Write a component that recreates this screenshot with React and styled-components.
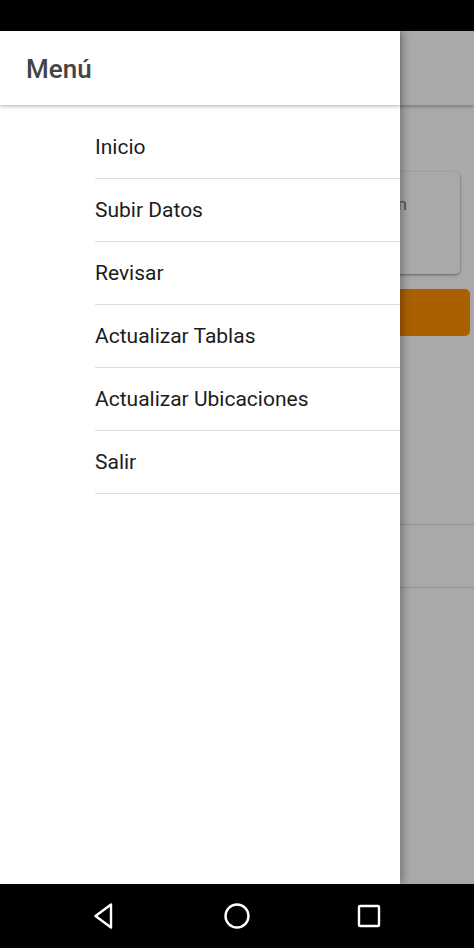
import React from 'react';
import styled, { createGlobalStyle } from 'styled-components';

const menuItems = [
    'Inicio',
    'Subir Datos',
    'Revisar',
    'Actualizar Tablas',
    'Actualizar Ubicaciones',
    'Salir',
];

export default function App() {
    return (
        <>
            <GlobalStyle />
            <Screen>
                <StatusBar />
                <Body>
                    {/* app behind the drawer */}
                    <BackApp>
                        <BackHeader />
                        <BackContent>
                            <SyncCard>
                                <SyncText>Última sincronización</SyncText>
                            </SyncCard>
                            <SyncButton />
                            <BackList>
                                <BackRow />
                                <BackRow />
                            </BackList>
                        </BackContent>
                    </BackApp>
                    <Scrim />

                    <Drawer>
                        <DrawerHeader>
                            <DrawerTitle>Menú</DrawerTitle>
                        </DrawerHeader>
                        <MenuList>
                            {menuItems.map((item) => (
                                <MenuItem key={item}>
                                    <MenuLabel>{item}</MenuLabel>
                                </MenuItem>
                            ))}
                        </MenuList>
                    </Drawer>
                </Body>
                <NavBar>
                    <NavButton>
                        <svg width="28" height="28" viewBox="0 0 28 28" fill="none" stroke="#fff" strokeWidth="2.4" strokeLinejoin="round">
                            <path d="M20 2.5 L4.5 14 L20 25.5 Z" />
                        </svg>
                    </NavButton>
                    <NavButton>
                        <svg width="28" height="28" viewBox="0 0 28 28" fill="none" stroke="#fff" strokeWidth="2.4">
                            <circle cx="14" cy="14" r="11.5" />
                        </svg>
                    </NavButton>
                    <NavButton>
                        <svg width="28" height="28" viewBox="0 0 28 28" fill="none" stroke="#fff" strokeWidth="2.4">
                            <rect x="4" y="4" width="20" height="20" rx="1" />
                        </svg>
                    </NavButton>
                </NavBar>
            </Screen>
        </>
    );
}

const GlobalStyle = createGlobalStyle`
html, body {
    margin: 0;
    padding: 0;
    background: #000;
}
* {
    box-sizing: border-box;
}
`;

const Screen = styled.div`
width: 474px;
height: 948px;
display: flex;
flex-direction: column;
font-family: Roboto, "Noto Sans", sans-serif;
overflow: hidden;
`;

const StatusBar = styled.div`
height: 31px;
background: #000;
flex-shrink: 0;
`;

const Body = styled.div`
position: relative;
flex: 1;
background: #fff;
overflow: hidden;
`;

const BackApp = styled.div`
display: flex;
flex-direction: column;
height: 100%;
background: #fdfdfd;
`;

const BackHeader = styled.div`
height: 74px;
background: #fdfdfd;
box-shadow: 0 2px 3px rgba(0, 0, 0, 0.25);
`;

const BackContent = styled.div`
display: flex;
flex-direction: column;
padding: 67px 4px 0 14px;
`;

const SyncCard = styled.div`
height: 102px;
margin-right: 10px;
border-radius: 5px;
background: #fdfdfd;
box-shadow: 0 1px 3px rgba(0, 0, 0, 0.45);
display: flex;
justify-content: flex-end;
padding: 22px 53px 0 0;
`;

const SyncText = styled.div`
font-size: 17px;
color: #777;
white-space: nowrap;
`;

const SyncButton = styled.div`
margin-top: 15px;
height: 47px;
border-radius: 5px;
background: #ff9000;
`;

const BackList = styled.div`
margin: 188px -4px 0 -14px;
`;

const BackRow = styled.div`
height: 63px;
border-top: 1.5px solid #dcdcdc;
`;

const Scrim = styled.div`
position: absolute;
inset: 0;
background: rgba(0, 0, 0, 0.33);
`;

const Drawer = styled.div`
position: absolute;
top: 0;
left: 0;
bottom: 0;
width: 400px;
background: #fff;
display: flex;
flex-direction: column;
box-shadow: 3px 0 8px rgba(0, 0, 0, 0.3);
`;

const DrawerHeader = styled.div`
height: 74px;
display: flex;
align-items: center;
padding-left: 26px;
background: #fff;
box-shadow: 0 2px 3px rgba(0, 0, 0, 0.22);
position: relative;
z-index: 1;
`;

const DrawerTitle = styled.div`
font-size: 26px;
font-weight: 500;
color: #444;
margin-top: 1px;
`;

const MenuList = styled.div`
padding: 11px 0 0 95px;
display: flex;
flex-direction: column;
`;

const MenuItem = styled.div`
height: 63px;
display: flex;
align-items: center;
border-bottom: 1.5px solid #dedede;
`;

const MenuLabel = styled.div`
font-size: 21px;
color: #1c1c1c;
`;

const NavBar = styled.div`
height: 64px;
flex-shrink: 0;
background: #000;
display: flex;
justify-content: center;
align-items: center;
gap: 104px;
padding-bottom: 1px;
`;

const NavButton = styled.div`
width: 28px;
height: 28px;
display: flex;
`;
